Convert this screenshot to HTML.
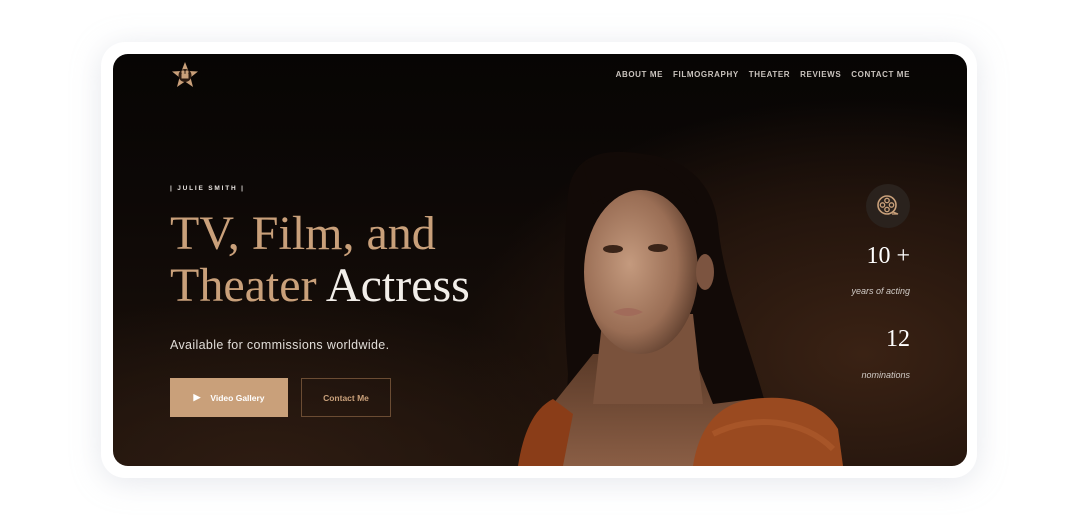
<!DOCTYPE html>
<html><head><meta charset="utf-8"><style>
html,body{margin:0;padding:0;width:1080px;height:521px;background:#fff;overflow:hidden;font-family:"Liberation Sans",sans-serif}
.outer{position:absolute;left:101px;top:42px;width:876px;height:436px;background:#fff;border-radius:24px;box-shadow:0 4px 30px rgba(180,185,200,.35)}
.hero{position:absolute;left:113px;top:54px;width:854px;height:412px;border-radius:15px;overflow:hidden;
background:radial-gradient(ellipse 500px 320px at 750px 300px,#3a2214 0%,#24150d 45%,rgba(10,6,4,0) 80%),
radial-gradient(ellipse 400px 200px at 150px 420px,#2e1c12 0%,rgba(10,6,4,0) 90%),
linear-gradient(180deg,#070504 0%,#0d0806 35%,#1d120b 100%)}
.nav{position:absolute;top:16px;right:57px;font-size:8px;font-weight:bold;letter-spacing:.6px;color:#c9c3bd}
.nav span{margin-left:10px}
.tag{position:absolute;left:57px;top:131px;font-size:6.5px;font-weight:bold;letter-spacing:1.8px;color:#e8e4e0}
h1{position:absolute;left:57px;top:154px;margin:0;font-family:"Liberation Serif",serif;font-weight:normal;font-size:48px;line-height:52px;color:#c9a07a}
h1 .w{color:#f2eee9}
.sub{position:absolute;left:57px;top:284px;font-size:12.5px;letter-spacing:.35px;color:#e0dcd7}
.b1{position:absolute;left:57px;top:324px;width:118px;height:39px;background:#c9a07a;color:#fff;font-size:8.5px;font-weight:bold;display:flex;align-items:center;justify-content:center}
.b2{position:absolute;left:188px;top:324px;width:88px;height:37px;border:1px solid #6b4c33;color:#c9a07a;font-size:8.5px;font-weight:bold;display:flex;align-items:center;justify-content:center}
.stat{position:absolute;right:57px;text-align:right;color:#fff}
.num{font-family:"Liberation Serif",serif;font-size:24px}
.lab{font-size:9px;font-style:italic;color:#d0cbc6}
.circ{position:absolute;left:753px;top:130px;width:44px;height:44px;border-radius:50%;background:#2a221d}
</style></head><body>
<div class="outer"></div>
<div class="hero">
<svg style="position:absolute;left:0;top:0" width="854" height="412">
 <defs>
  <radialGradient id="sk" cx="0.4" cy="0.45" r="0.7"><stop offset="0" stop-color="#c49a7e"/><stop offset="0.6" stop-color="#9a6e55"/><stop offset="1" stop-color="#4a2e20"/></radialGradient>
  <linearGradient id="ch" x1="0" y1="0" x2="0" y2="1"><stop offset="0" stop-color="#5a3a28"/><stop offset="1" stop-color="#8a5e45"/></linearGradient>
 </defs>
 <path d="M455 140 C460 95 500 95 530 100 C575 105 600 130 605 170 C610 230 640 300 655 360 L660 412 L450 412 L455 320 C450 260 450 200 455 140Z" fill="#120a07"/>
 <path d="M480 300 L580 300 L600 350 L640 345 L700 360 L720 412 L420 412 L440 350 Z" fill="url(#ch)"/>
 <path d="M490 260 L580 260 L590 350 L480 350 Z" fill="#7a523c"/>
 <ellipse cx="528" cy="218" rx="57" ry="82" fill="url(#sk)"/>
 <ellipse cx="592" cy="218" rx="9" ry="18" fill="#7c5440"/>
 <path d="M470 110 C500 95 560 100 585 150 C560 125 520 125 480 150 Z" fill="#120a07"/>
 <ellipse cx="500" cy="195" rx="10" ry="4" fill="#3a2418"/><ellipse cx="545" cy="194" rx="10" ry="4" fill="#3a2418"/>
 <path d="M500 258 Q515 250 530 258 Q515 266 500 258Z" fill="#a16b5a"/>
 <path d="M405 412 C410 380 420 355 440 345 L460 360 L450 412Z" fill="#8a3d18"/>
 <path d="M580 412 C585 380 600 350 640 345 C680 340 710 350 725 375 L730 412Z" fill="#9a4a20"/>
 <path d="M600 380 C640 360 690 365 720 395" stroke="#b3602f" stroke-width="6" fill="none" opacity=".5"/>
</svg>
<svg style="position:absolute;left:58px;top:7px" width="28" height="28" viewBox="0 0 28 28">
 <path d="M14 1 L17.5 10 L27 10.5 L19.5 16.5 L22 26 L14 20.5 L6 26 L8.5 16.5 L1 10.5 L10.5 10Z" fill="#c9a07a"/>
 <circle cx="14" cy="14.5" r="6.5" fill="#2a1a10"/><rect x="10.5" y="12.5" width="7" height="5" fill="#c9a07a"/><circle cx="12" cy="11" r="1.6" fill="#c9a07a"/><circle cx="16" cy="11" r="1.6" fill="#c9a07a"/>
</svg>
<div class="nav"><span>ABOUT ME</span><span>FILMOGRAPHY</span><span>THEATER</span><span>REVIEWS</span><span>CONTACT ME</span></div>
<div class="tag">| JULIE SMITH |</div>
<h1>TV, Film, and<br>Theater <span class="w">Actress</span></h1>
<div class="sub">Available for commissions worldwide.</div>
<div class="b1"><span style="font-size:9px;margin-right:10px">▶</span>Video Gallery</div>
<div class="b2">Contact Me</div>
<div class="circ"><svg width="44" height="44" viewBox="0 0 44 44"><circle cx="21" cy="21" r="9" fill="none" stroke="#c9a07a" stroke-width="1.6"/><circle cx="21" cy="16.5" r="2.2" fill="none" stroke="#c9a07a" stroke-width="1.3"/><circle cx="16.5" cy="21" r="2.2" fill="none" stroke="#c9a07a" stroke-width="1.3"/><circle cx="25.5" cy="21" r="2.2" fill="none" stroke="#c9a07a" stroke-width="1.3"/><circle cx="21" cy="25.5" r="2.2" fill="none" stroke="#c9a07a" stroke-width="1.3"/><path d="M27 28 L32 30 L26 30" stroke="#c9a07a" stroke-width="1.3" fill="none"/></svg></div>
<div class="stat" style="top:189px"><div class="num">10 +</div></div>
<div class="stat" style="top:232px"><div class="lab">years of acting</div></div>
<div class="stat" style="top:272px"><div class="num">12</div></div>
<div class="stat" style="top:316px"><div class="lab">nominations</div></div>
</div>
</body></html>
